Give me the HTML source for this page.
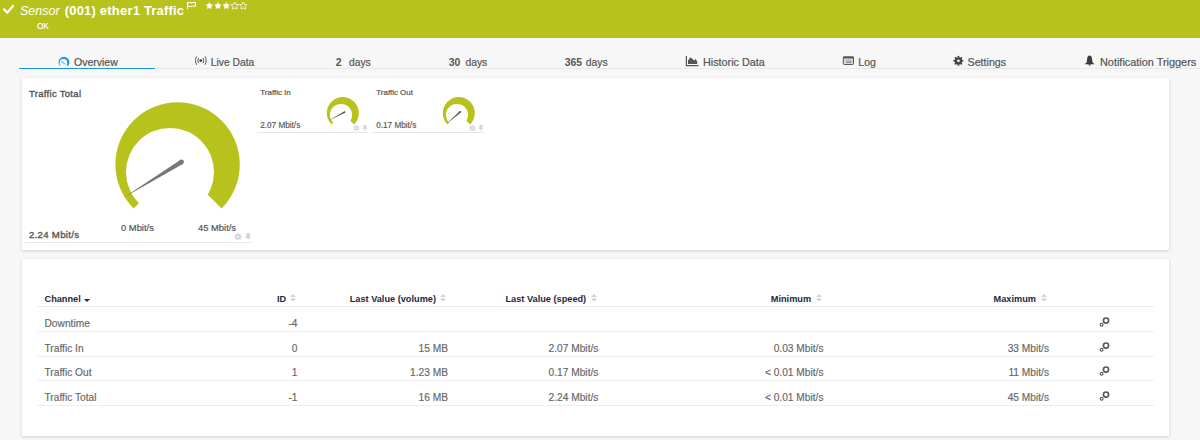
<!DOCTYPE html>
<html><head><meta charset="utf-8"><style>
html,body{margin:0;padding:0;}
body{width:1200px;height:440px;overflow:hidden;position:relative;background:#f7f7f7;font-family:"Liberation Sans",sans-serif;}
.t{position:absolute;white-space:nowrap;line-height:1;}
</style></head><body>
<div style="position:absolute;left:0px;top:0px;width:1200px;height:38px;background:#b8c21c"></div>
<svg style="position:absolute;left:0;top:0" width="20" height="20"><polyline points="3.4,8.7 7.3,12.6 13.6,5.2" fill="none" stroke="#fff" stroke-width="2.1" stroke-linecap="butt"/></svg>
<div class="t" style="left:20.00px;top:4.92px;font-size:12.5px;font-weight:normal;color:#fff;font-style:italic;letter-spacing:0px;">Sensor</div>
<div class="t" style="left:64.70px;top:3.60px;font-size:13px;font-weight:bold;color:#fff;font-style:normal;letter-spacing:0.2px;">(001) ether1 Traffic</div>
<svg style="position:absolute;left:186px;top:1px" width="12" height="10"><path d="M1.5,1 V8.2" stroke="#fff" stroke-width="1.1" fill="none"/><path d="M1.5,1.7 C3,1.1 4.5,2.3 6,1.7 C7.3,1.2 8.3,1.3 9.4,1.5 V5.1 C8.3,4.9 7.3,4.8 6,5.3 C4.5,5.9 3,4.7 1.5,5.3" fill="none" stroke="#fff" stroke-width="1.1"/></svg>
<svg style="position:absolute;left:204px;top:1px" width="46" height="12"><polygon points="5.40,1.05 6.55,3.37 9.11,3.74 7.25,5.55 7.69,8.11 5.40,6.90 3.11,8.11 3.55,5.55 1.69,3.74 4.25,3.37" fill="#fff"/><polygon points="13.87,1.05 15.02,3.37 17.58,3.74 15.72,5.55 16.16,8.11 13.87,6.90 11.58,8.11 12.02,5.55 10.16,3.74 12.72,3.37" fill="#fff"/><polygon points="22.34,1.05 23.49,3.37 26.05,3.74 24.19,5.55 24.63,8.11 22.34,6.90 20.05,8.11 20.49,5.55 18.63,3.74 21.19,3.37" fill="#fff"/><polygon points="30.81,1.05 31.96,3.37 34.52,3.74 32.66,5.55 33.10,8.11 30.81,6.90 28.52,8.11 28.96,5.55 27.10,3.74 29.66,3.37" fill="none" stroke="#fff" stroke-width="0.8"/><polygon points="39.28,1.05 40.43,3.37 42.99,3.74 41.13,5.55 41.57,8.11 39.28,6.90 36.99,8.11 37.43,5.55 35.57,3.74 38.13,3.37" fill="none" stroke="#fff" stroke-width="0.8"/></svg>
<div class="t" style="left:36.90px;top:23.16px;font-size:8.2px;font-weight:normal;color:#fff;font-style:normal;letter-spacing:0px;transform:scaleY(1.2);transform-origin:0 100%;-webkit-text-stroke:0.2px #fff;">OK</div>
<div style="position:absolute;left:18.8px;top:67.8px;width:136.2px;height:1.6px;background:#1a9bd7"></div>
<div style="position:absolute;left:155px;top:68.4px;width:1045px;height:1px;background:#e9e9e9"></div>
<svg style="position:absolute;left:0;top:0" width="80" height="80"><defs><mask id="ov"><rect x="-100" y="-100" width="3000" height="3000" fill="#fff"/><circle cx="63.40" cy="62.85" r="3.85" fill="#000"/></mask></defs><path d="M63.95,62.30 L60.06,66.19 A5.5,5.5 0 1 1 67.84,66.19 Z" fill="#1a9bd7" mask="url(#ov)"/><line x1="61.6" y1="61.6" x2="65" y2="64.1" stroke="#1a9bd7" stroke-width="0.9" stroke-linecap="round"/></svg>
<div class="t" style="left:74.00px;top:57.31px;font-size:10.5px;font-weight:normal;color:#555;font-style:normal;letter-spacing:0px;-webkit-text-stroke:0.2px #555;">Overview</div>
<svg style="position:absolute;left:194px;top:55px" width="14" height="12"><circle cx="6.8" cy="5.6" r="1.45" fill="#444"/><path d="M2.6,1.4 C1.1,3.6 1.1,7.6 2.6,9.8 M4.6,3 C3.7,4.4 3.7,6.8 4.6,8.2 M11,1.4 C12.5,3.6 12.5,7.6 11,9.8 M9,3 C9.9,4.4 9.9,6.8 9,8.2" fill="none" stroke="#555" stroke-width="1"/></svg>
<div class="t" style="left:210.80px;top:58.28px;font-size:10.3px;font-weight:normal;color:#555;font-style:normal;letter-spacing:0px;-webkit-text-stroke:0.2px #555;">Live Data</div>
<div class="t" style="left:335.80px;top:58.20px;font-size:10.4px;font-weight:bold;color:#555;font-style:normal;letter-spacing:0px;">2</div>
<div class="t" style="left:349.00px;top:58.28px;font-size:10.3px;font-weight:normal;color:#555;font-style:normal;letter-spacing:0px;-webkit-text-stroke:0.2px #555;">days</div>
<div class="t" style="left:448.80px;top:58.20px;font-size:10.4px;font-weight:bold;color:#555;font-style:normal;letter-spacing:0px;">30</div>
<div class="t" style="left:465.50px;top:58.28px;font-size:10.3px;font-weight:normal;color:#555;font-style:normal;letter-spacing:0px;-webkit-text-stroke:0.2px #555;">days</div>
<div class="t" style="left:564.70px;top:58.20px;font-size:10.4px;font-weight:bold;color:#555;font-style:normal;letter-spacing:0px;">365</div>
<div class="t" style="left:585.80px;top:58.28px;font-size:10.3px;font-weight:normal;color:#555;font-style:normal;letter-spacing:0px;-webkit-text-stroke:0.2px #555;">days</div>
<svg style="position:absolute;left:685px;top:56px" width="15" height="11"><path d="M1.4,0 V9.6 H13.6" fill="none" stroke="#555" stroke-width="1.2"/><path d="M3,8 V4.6 L5.4,1.2 L9.2,4.6 L10.6,3 L12.2,5.6 V8 Z" fill="#555"/></svg>
<div class="t" style="left:703.00px;top:57.06px;font-size:10.8px;font-weight:normal;color:#555;font-style:normal;letter-spacing:0px;-webkit-text-stroke:0.2px #555;">Historic Data</div>
<svg style="position:absolute;left:842px;top:55.5px" width="13" height="11"><rect x="1.3" y="0.9" width="10.2" height="7.6" rx="1" fill="#d8d8d8" stroke="#555" stroke-width="1"/><rect x="1" y="0.6" width="10.8" height="1.8" fill="#555"/><line x1="4.2" y1="6.1" x2="9.6" y2="6.1" stroke="#666" stroke-width="1"/><line x1="4.2" y1="4.1" x2="9.6" y2="4.1" stroke="#aaa" stroke-width="0.8"/></svg>
<div class="t" style="left:858.30px;top:57.31px;font-size:10.5px;font-weight:normal;color:#555;font-style:normal;letter-spacing:0px;-webkit-text-stroke:0.2px #555;">Log</div>
<svg style="position:absolute;left:952px;top:55px" width="14" height="14"><circle cx="6.4" cy="5.8" r="3.63" fill="#444"/><rect x="5.52" y="0.90" width="1.76" height="1.87" fill="#444" transform="rotate(0.0 6.4 5.8)"/><rect x="5.52" y="0.90" width="1.76" height="1.87" fill="#444" transform="rotate(45.0 6.4 5.8)"/><rect x="5.52" y="0.90" width="1.76" height="1.87" fill="#444" transform="rotate(90.0 6.4 5.8)"/><rect x="5.52" y="0.90" width="1.76" height="1.87" fill="#444" transform="rotate(135.0 6.4 5.8)"/><rect x="5.52" y="0.90" width="1.76" height="1.87" fill="#444" transform="rotate(180.0 6.4 5.8)"/><rect x="5.52" y="0.90" width="1.76" height="1.87" fill="#444" transform="rotate(225.0 6.4 5.8)"/><rect x="5.52" y="0.90" width="1.76" height="1.87" fill="#444" transform="rotate(270.0 6.4 5.8)"/><rect x="5.52" y="0.90" width="1.76" height="1.87" fill="#444" transform="rotate(315.0 6.4 5.8)"/><circle cx="6.4" cy="5.8" r="1.37" fill="#f7f7f7"/></svg>
<div class="t" style="left:967.50px;top:57.14px;font-size:10.7px;font-weight:normal;color:#555;font-style:normal;letter-spacing:0px;-webkit-text-stroke:0.2px #555;">Settings</div>
<svg style="position:absolute;left:1084px;top:55px" width="12" height="12"><path d="M5.6,0.5 C4.3,0.7 3.4,1.7 3.2,3.3 L2.8,6.8 C2.6,7.7 1.6,8.5 0.7,9.2 H10.5 C9.6,8.5 8.6,7.7 8.4,6.8 L8,3.3 C7.8,1.7 6.9,0.7 5.6,0.5 Z" fill="#3c3c3c"/><path d="M4.3,9.3 A1.3,1.3 0 0 0 6.9,9.3 Z" fill="#3c3c3c"/></svg>
<div class="t" style="left:1100.00px;top:56.97px;font-size:10.9px;font-weight:normal;color:#555;font-style:normal;letter-spacing:0px;-webkit-text-stroke:0.2px #555;">Notification Triggers</div>
<div style="position:absolute;left:22px;top:78px;width:1147px;height:172px;background:#fff;box-shadow:0 1px 3px rgba(0,0,0,0.16)"></div>
<div class="t" style="left:29.00px;top:88.56px;font-size:9.5px;font-weight:normal;color:#555;font-style:normal;letter-spacing:0.3px;-webkit-text-stroke:0.35px #555;">Traffic Total</div>
<svg style="position:absolute;left:0;top:0" width="1200" height="440"><defs><mask id="m177"><rect x="-1000" y="-1000" width="3000" height="3000" fill="#fff"/><circle cx="170.00" cy="172.00" r="44.0" fill="#000"/></mask></defs><path d="M177.60,164.40 L133.62,208.38 A62.2,62.2 0 1 1 221.58,208.38 Z" fill="#b8c21c" mask="url(#m177)"/><path d="M123.41,197.69 L182.78,164.04 L180.26,159.95 Z" fill="#777"/><circle cx="181.52" cy="161.99" r="2.40" fill="#777"/><defs><mask id="m342"><rect x="-1000" y="-1000" width="3000" height="3000" fill="#fff"/><circle cx="341.00" cy="114.90" r="11.0" fill="#000"/></mask></defs><path d="M342.80,113.10 L331.49,124.41 A16.0,16.0 0 1 1 354.11,124.41 Z" fill="#b8c21c" mask="url(#m342)"/><path d="M328.24,120.86 L344.94,112.87 L344.19,111.45 Z" fill="#4a4a4a"/><circle cx="344.56" cy="112.16" r="0.80" fill="#4a4a4a"/><defs><mask id="m458"><rect x="-1000" y="-1000" width="3000" height="3000" fill="#fff"/><circle cx="457.00" cy="114.90" r="11.0" fill="#000"/></mask></defs><path d="M458.80,113.10 L447.49,124.41 A16.0,16.0 0 1 1 470.11,124.41 Z" fill="#b8c21c" mask="url(#m458)"/><path d="M446.31,123.89 L460.84,112.40 L459.79,111.19 Z" fill="#4a4a4a"/><circle cx="460.31" cy="111.79" r="0.80" fill="#4a4a4a"/></svg>
<div class="t" style="left:29.00px;top:229.87px;font-size:9.6px;font-weight:normal;color:#555;font-style:normal;letter-spacing:0.3px;-webkit-text-stroke:0.35px #555;">2.24 Mbit/s</div>
<div class="t" style="left:121.00px;top:223.04px;font-size:9.4px;font-weight:normal;color:#555;font-style:normal;letter-spacing:0px;-webkit-text-stroke:0.2px #555;">0 Mbit/s</div>
<div class="t" style="left:198.00px;top:223.04px;font-size:9.4px;font-weight:normal;color:#555;font-style:normal;letter-spacing:0px;-webkit-text-stroke:0.2px #555;">45 Mbit/s</div>
<svg style="position:absolute;left:233.5px;top:232px;transform:scale(1.0);transform-origin:0 0" width="20" height="10"><circle cx="4" cy="4.7" r="2.66" fill="#d4d4d4"/><rect x="3.35" y="1.10" width="1.30" height="1.54" fill="#d4d4d4" transform="rotate(0.0 4 4.7)"/><rect x="3.35" y="1.10" width="1.30" height="1.54" fill="#d4d4d4" transform="rotate(45.0 4 4.7)"/><rect x="3.35" y="1.10" width="1.30" height="1.54" fill="#d4d4d4" transform="rotate(90.0 4 4.7)"/><rect x="3.35" y="1.10" width="1.30" height="1.54" fill="#d4d4d4" transform="rotate(135.0 4 4.7)"/><rect x="3.35" y="1.10" width="1.30" height="1.54" fill="#d4d4d4" transform="rotate(180.0 4 4.7)"/><rect x="3.35" y="1.10" width="1.30" height="1.54" fill="#d4d4d4" transform="rotate(225.0 4 4.7)"/><rect x="3.35" y="1.10" width="1.30" height="1.54" fill="#d4d4d4" transform="rotate(270.0 4 4.7)"/><rect x="3.35" y="1.10" width="1.30" height="1.54" fill="#d4d4d4" transform="rotate(315.0 4 4.7)"/><circle cx="4" cy="4.7" r="1.01" fill="#fff"/><path d="M12.3,1.2 H15.9 V4.4 L16.9,6 H11.3 L12.3,4.4 Z" fill="#d4d4d4"/><rect x="13.6" y="5.8" width="1" height="2.8" fill="#d4d4d4"/></svg>
<div style="position:absolute;left:25px;top:241.5px;width:227px;height:1px;background:#e6e6e6"></div>
<div class="t" style="left:260.30px;top:89.27px;font-size:7.95px;font-weight:normal;color:#555;font-style:normal;letter-spacing:0px;-webkit-text-stroke:0.2px #555;">Traffic In</div>
<div class="t" style="left:260.20px;top:122.46px;font-size:8.2px;font-weight:normal;color:#555;font-style:normal;letter-spacing:0px;-webkit-text-stroke:0.15px #555;">2.07 Mbit/s</div>
<div style="position:absolute;left:256.5px;top:131.8px;width:111px;height:1px;background:#e6e6e6"></div>
<svg style="position:absolute;left:353px;top:123.9px;transform:scale(0.85);transform-origin:0 0" width="20" height="10"><circle cx="4" cy="4.7" r="2.66" fill="#d4d4d4"/><rect x="3.35" y="1.10" width="1.30" height="1.54" fill="#d4d4d4" transform="rotate(0.0 4 4.7)"/><rect x="3.35" y="1.10" width="1.30" height="1.54" fill="#d4d4d4" transform="rotate(45.0 4 4.7)"/><rect x="3.35" y="1.10" width="1.30" height="1.54" fill="#d4d4d4" transform="rotate(90.0 4 4.7)"/><rect x="3.35" y="1.10" width="1.30" height="1.54" fill="#d4d4d4" transform="rotate(135.0 4 4.7)"/><rect x="3.35" y="1.10" width="1.30" height="1.54" fill="#d4d4d4" transform="rotate(180.0 4 4.7)"/><rect x="3.35" y="1.10" width="1.30" height="1.54" fill="#d4d4d4" transform="rotate(225.0 4 4.7)"/><rect x="3.35" y="1.10" width="1.30" height="1.54" fill="#d4d4d4" transform="rotate(270.0 4 4.7)"/><rect x="3.35" y="1.10" width="1.30" height="1.54" fill="#d4d4d4" transform="rotate(315.0 4 4.7)"/><circle cx="4" cy="4.7" r="1.01" fill="#fff"/><path d="M12.3,1.2 H15.9 V4.4 L16.9,6 H11.3 L12.3,4.4 Z" fill="#d4d4d4"/><rect x="13.6" y="5.8" width="1" height="2.8" fill="#d4d4d4"/></svg>
<div class="t" style="left:376.30px;top:89.27px;font-size:7.95px;font-weight:normal;color:#555;font-style:normal;letter-spacing:0px;-webkit-text-stroke:0.2px #555;">Traffic Out</div>
<div class="t" style="left:376.20px;top:122.46px;font-size:8.2px;font-weight:normal;color:#555;font-style:normal;letter-spacing:0px;-webkit-text-stroke:0.15px #555;">0.17 Mbit/s</div>
<div style="position:absolute;left:372.5px;top:131.8px;width:111px;height:1px;background:#e6e6e6"></div>
<svg style="position:absolute;left:469px;top:123.9px;transform:scale(0.85);transform-origin:0 0" width="20" height="10"><circle cx="4" cy="4.7" r="2.66" fill="#d4d4d4"/><rect x="3.35" y="1.10" width="1.30" height="1.54" fill="#d4d4d4" transform="rotate(0.0 4 4.7)"/><rect x="3.35" y="1.10" width="1.30" height="1.54" fill="#d4d4d4" transform="rotate(45.0 4 4.7)"/><rect x="3.35" y="1.10" width="1.30" height="1.54" fill="#d4d4d4" transform="rotate(90.0 4 4.7)"/><rect x="3.35" y="1.10" width="1.30" height="1.54" fill="#d4d4d4" transform="rotate(135.0 4 4.7)"/><rect x="3.35" y="1.10" width="1.30" height="1.54" fill="#d4d4d4" transform="rotate(180.0 4 4.7)"/><rect x="3.35" y="1.10" width="1.30" height="1.54" fill="#d4d4d4" transform="rotate(225.0 4 4.7)"/><rect x="3.35" y="1.10" width="1.30" height="1.54" fill="#d4d4d4" transform="rotate(270.0 4 4.7)"/><rect x="3.35" y="1.10" width="1.30" height="1.54" fill="#d4d4d4" transform="rotate(315.0 4 4.7)"/><circle cx="4" cy="4.7" r="1.01" fill="#fff"/><path d="M12.3,1.2 H15.9 V4.4 L16.9,6 H11.3 L12.3,4.4 Z" fill="#d4d4d4"/><rect x="13.6" y="5.8" width="1" height="2.8" fill="#d4d4d4"/></svg>
<div style="position:absolute;left:22px;top:259px;width:1147px;height:177px;background:#fff;box-shadow:0 1px 3px rgba(0,0,0,0.16)"></div>
<div class="t" style="left:44.50px;top:295.21px;font-size:9.2px;font-weight:bold;color:#1f2640;font-style:normal;letter-spacing:0px;">Channel</div>
<svg style="position:absolute;left:83px;top:297.5px" width="8" height="5"><path d="M1,1 H7 L4,4 Z" fill="#1f2640"/></svg>
<div class="t" style="left:277.00px;top:295.21px;font-size:9.2px;font-weight:bold;color:#1f2640;font-style:normal;letter-spacing:0px;">ID</div>
<svg style="position:absolute;left:289.8px;top:293.8px" width="7" height="9"><path d="M0,3.1 L3,0 L6,3.1 Z M0,4.4 L3,7.5 L6,4.4 Z" fill="#cfcfcf"/></svg>
<div class="t" style="left:349.70px;top:295.21px;font-size:9.2px;font-weight:bold;color:#1f2640;font-style:normal;letter-spacing:0px;">Last Value (volume)</div>
<svg style="position:absolute;left:440.3px;top:293.8px" width="7" height="9"><path d="M0,3.1 L3,0 L6,3.1 Z M0,4.4 L3,7.5 L6,4.4 Z" fill="#cfcfcf"/></svg>
<div class="t" style="left:505.50px;top:295.21px;font-size:9.2px;font-weight:bold;color:#1f2640;font-style:normal;letter-spacing:0px;">Last Value (speed)</div>
<svg style="position:absolute;left:590.8px;top:293.8px" width="7" height="9"><path d="M0,3.1 L3,0 L6,3.1 Z M0,4.4 L3,7.5 L6,4.4 Z" fill="#cfcfcf"/></svg>
<div class="t" style="left:770.80px;top:295.21px;font-size:9.2px;font-weight:bold;color:#1f2640;font-style:normal;letter-spacing:0px;">Minimum</div>
<svg style="position:absolute;left:816px;top:293.8px" width="7" height="9"><path d="M0,3.1 L3,0 L6,3.1 Z M0,4.4 L3,7.5 L6,4.4 Z" fill="#cfcfcf"/></svg>
<div class="t" style="left:993.60px;top:295.21px;font-size:9.2px;font-weight:bold;color:#1f2640;font-style:normal;letter-spacing:0px;">Maximum</div>
<svg style="position:absolute;left:1041.3px;top:293.8px" width="7" height="9"><path d="M0,3.1 L3,0 L6,3.1 Z M0,4.4 L3,7.5 L6,4.4 Z" fill="#cfcfcf"/></svg>
<div style="position:absolute;left:37px;top:306px;width:1117px;height:1px;background:#eeeeee"></div>
<div class="t" style="left:44.50px;top:318.87px;font-size:10.2px;font-weight:normal;color:#666;font-style:normal;letter-spacing:0px;-webkit-text-stroke:0.15px #666;">Downtime</div>
<div class="t" style="right:902.50px;top:318.87px;font-size:10.2px;font-weight:normal;color:#666;font-style:normal;letter-spacing:0px;-webkit-text-stroke:0.15px #666;">-4</div>
<svg style="position:absolute;left:1099px;top:316.9px" width="12" height="10"><circle cx="7" cy="3.6" r="2.6" fill="none" stroke="#555" stroke-width="1.6"/><circle cx="2.6" cy="7.7" r="1.45" fill="none" stroke="#555" stroke-width="1.1"/></svg>
<div style="position:absolute;left:37px;top:331px;width:1117px;height:1px;background:#eeeeee"></div>
<div class="t" style="left:44.50px;top:343.62px;font-size:10.2px;font-weight:normal;color:#666;font-style:normal;letter-spacing:0px;-webkit-text-stroke:0.15px #666;">Traffic In</div>
<div class="t" style="right:902.50px;top:343.62px;font-size:10.2px;font-weight:normal;color:#666;font-style:normal;letter-spacing:0px;-webkit-text-stroke:0.15px #666;">0</div>
<div class="t" style="right:752.00px;top:343.62px;font-size:10.2px;font-weight:normal;color:#666;font-style:normal;letter-spacing:0px;-webkit-text-stroke:0.15px #666;">15 MB</div>
<div class="t" style="right:601.60px;top:343.62px;font-size:10.2px;font-weight:normal;color:#666;font-style:normal;letter-spacing:0px;-webkit-text-stroke:0.15px #666;">2.07 Mbit/s</div>
<div class="t" style="right:376.50px;top:343.62px;font-size:10.2px;font-weight:normal;color:#666;font-style:normal;letter-spacing:0px;-webkit-text-stroke:0.15px #666;">0.03 Mbit/s</div>
<div class="t" style="right:151.00px;top:343.62px;font-size:10.2px;font-weight:normal;color:#666;font-style:normal;letter-spacing:0px;-webkit-text-stroke:0.15px #666;">33 Mbit/s</div>
<svg style="position:absolute;left:1099px;top:341.6px" width="12" height="10"><circle cx="7" cy="3.6" r="2.6" fill="none" stroke="#555" stroke-width="1.6"/><circle cx="2.6" cy="7.7" r="1.45" fill="none" stroke="#555" stroke-width="1.1"/></svg>
<div style="position:absolute;left:37px;top:355.6px;width:1117px;height:1px;background:#eeeeee"></div>
<div class="t" style="left:44.50px;top:368.37px;font-size:10.2px;font-weight:normal;color:#666;font-style:normal;letter-spacing:0px;-webkit-text-stroke:0.15px #666;">Traffic Out</div>
<div class="t" style="right:902.50px;top:368.37px;font-size:10.2px;font-weight:normal;color:#666;font-style:normal;letter-spacing:0px;-webkit-text-stroke:0.15px #666;">1</div>
<div class="t" style="right:752.00px;top:368.37px;font-size:10.2px;font-weight:normal;color:#666;font-style:normal;letter-spacing:0px;-webkit-text-stroke:0.15px #666;">1.23 MB</div>
<div class="t" style="right:601.60px;top:368.37px;font-size:10.2px;font-weight:normal;color:#666;font-style:normal;letter-spacing:0px;-webkit-text-stroke:0.15px #666;">0.17 Mbit/s</div>
<div class="t" style="right:376.50px;top:368.37px;font-size:10.2px;font-weight:normal;color:#666;font-style:normal;letter-spacing:0px;-webkit-text-stroke:0.15px #666;">&lt; 0.01 Mbit/s</div>
<div class="t" style="right:151.00px;top:368.37px;font-size:10.2px;font-weight:normal;color:#666;font-style:normal;letter-spacing:0px;-webkit-text-stroke:0.15px #666;">11 Mbit/s</div>
<svg style="position:absolute;left:1099px;top:366.4px" width="12" height="10"><circle cx="7" cy="3.6" r="2.6" fill="none" stroke="#555" stroke-width="1.6"/><circle cx="2.6" cy="7.7" r="1.45" fill="none" stroke="#555" stroke-width="1.1"/></svg>
<div style="position:absolute;left:37px;top:380px;width:1117px;height:1px;background:#eeeeee"></div>
<div class="t" style="left:44.50px;top:393.12px;font-size:10.2px;font-weight:normal;color:#666;font-style:normal;letter-spacing:0px;-webkit-text-stroke:0.15px #666;">Traffic Total</div>
<div class="t" style="right:902.50px;top:393.12px;font-size:10.2px;font-weight:normal;color:#666;font-style:normal;letter-spacing:0px;-webkit-text-stroke:0.15px #666;">-1</div>
<div class="t" style="right:752.00px;top:393.12px;font-size:10.2px;font-weight:normal;color:#666;font-style:normal;letter-spacing:0px;-webkit-text-stroke:0.15px #666;">16 MB</div>
<div class="t" style="right:601.60px;top:393.12px;font-size:10.2px;font-weight:normal;color:#666;font-style:normal;letter-spacing:0px;-webkit-text-stroke:0.15px #666;">2.24 Mbit/s</div>
<div class="t" style="right:376.50px;top:393.12px;font-size:10.2px;font-weight:normal;color:#666;font-style:normal;letter-spacing:0px;-webkit-text-stroke:0.15px #666;">&lt; 0.01 Mbit/s</div>
<div class="t" style="right:151.00px;top:393.12px;font-size:10.2px;font-weight:normal;color:#666;font-style:normal;letter-spacing:0px;-webkit-text-stroke:0.15px #666;">45 Mbit/s</div>
<svg style="position:absolute;left:1099px;top:391.1px" width="12" height="10"><circle cx="7" cy="3.6" r="2.6" fill="none" stroke="#555" stroke-width="1.6"/><circle cx="2.6" cy="7.7" r="1.45" fill="none" stroke="#555" stroke-width="1.1"/></svg>
<div style="position:absolute;left:37px;top:405px;width:1117px;height:1px;background:#eeeeee"></div>
</body></html>
